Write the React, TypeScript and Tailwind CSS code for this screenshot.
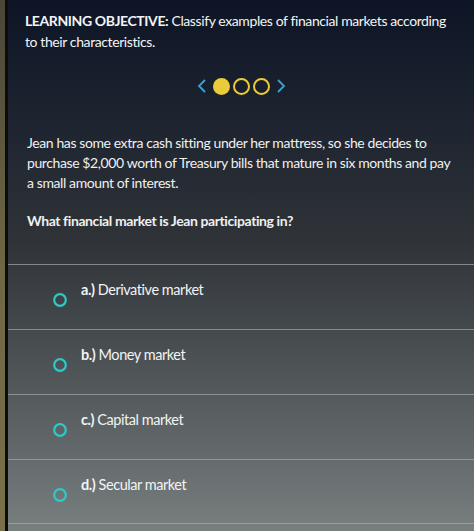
import React from "react";

function Radio() {
  return (
    <svg width="16" height="16" viewBox="0 0 16 16" className="shrink-0">
      <circle cx="8" cy="8" r="5.8" fill="none" stroke="#2ec8c8" strokeWidth="2.2" />
    </svg>
  );
}

function Option({ letter, text, last }: { letter: string; text: string; last?: boolean }) {
  return (
    <div className={`flex h-[65px] items-start border-t border-[#a4a9ab]/70 pl-[44px] pt-[14px] ${last ? "border-b" : ""}`}>
      <div className="mt-[13px]">
        <Radio />
      </div>
      <div className="ml-[13px] text-[14.5px] tracking-[-0.45px] text-[#f2f3f3]">
        <span className="font-bold">{letter}</span> {text}
      </div>
    </div>
  );
}

export default function App() {
  return (
    <div
      className="flex h-[531px] w-[474px] overflow-hidden"
      style={{ fontFamily: "Lato, 'Open Sans', sans-serif" }}
    >
      <div className="w-[5px] shrink-0 bg-gradient-to-b from-[#4a4636] via-[#6e6745] to-[#7a7048]" />
      <div className="w-[3px] shrink-0 bg-[#0c0c0c]" />
      <div className="flex flex-1 flex-col bg-gradient-to-b from-[#0d1526] via-[#2f3338] via-45% to-[#787f7f]">
        <div className="pl-[17px] pr-[22px] pt-[10px] text-[14px] leading-[21px] tracking-[-0.4px] text-[#f3f4f5]">
          <span className="font-bold">LEARNING OBJECTIVE:</span> Classify examples of financial markets according to their characteristics.
        </div>
        <div className="mt-[25px] flex items-center justify-center">
          <svg width="14" height="18" viewBox="0 0 14 18" className="mr-[4px]">
            <path d="M10 3 L4 9 L10 15" fill="none" stroke="#3aa3d6" strokeWidth="1.8" />
          </svg>
          <div className="h-[17px] w-[17px] rounded-full bg-[#ebcb3c]" />
          <div className="ml-[3px] h-[17px] w-[17px] rounded-full border-2 border-[#ebcb3c]" />
          <div className="ml-[3px] h-[17px] w-[17px] rounded-full border-2 border-[#ebcb3c]" />
          <svg width="14" height="18" viewBox="0 0 14 18" className="ml-[4px]">
            <path d="M4 3 L10 9 L4 15" fill="none" stroke="#3aa3d6" strokeWidth="1.8" />
          </svg>
        </div>
        <div className="mt-[38px] pl-[19px] pr-[17px] text-[14px] leading-[20px] tracking-[-0.4px] text-[#eef0f1]">
          Jean has some extra cash sitting under her mattress, so she decides to purchase $2,000 worth of Treasury bills that mature in six months and pay a small amount of interest.
        </div>
        <div className="mt-[18px] px-[19px] text-[14px] font-bold leading-[20px] tracking-[-0.4px] text-[#eef0f1]">
          What financial market is Jean participating in?
        </div>
        <div className="mt-[33px]">
          <Option letter="a.)" text="Derivative market" />
          <Option letter="b.)" text="Money market" />
          <Option letter="c.)" text="Capital market" />
          <Option letter="d.)" text="Secular market" last />
        </div>
      </div>
    </div>
  );
}
